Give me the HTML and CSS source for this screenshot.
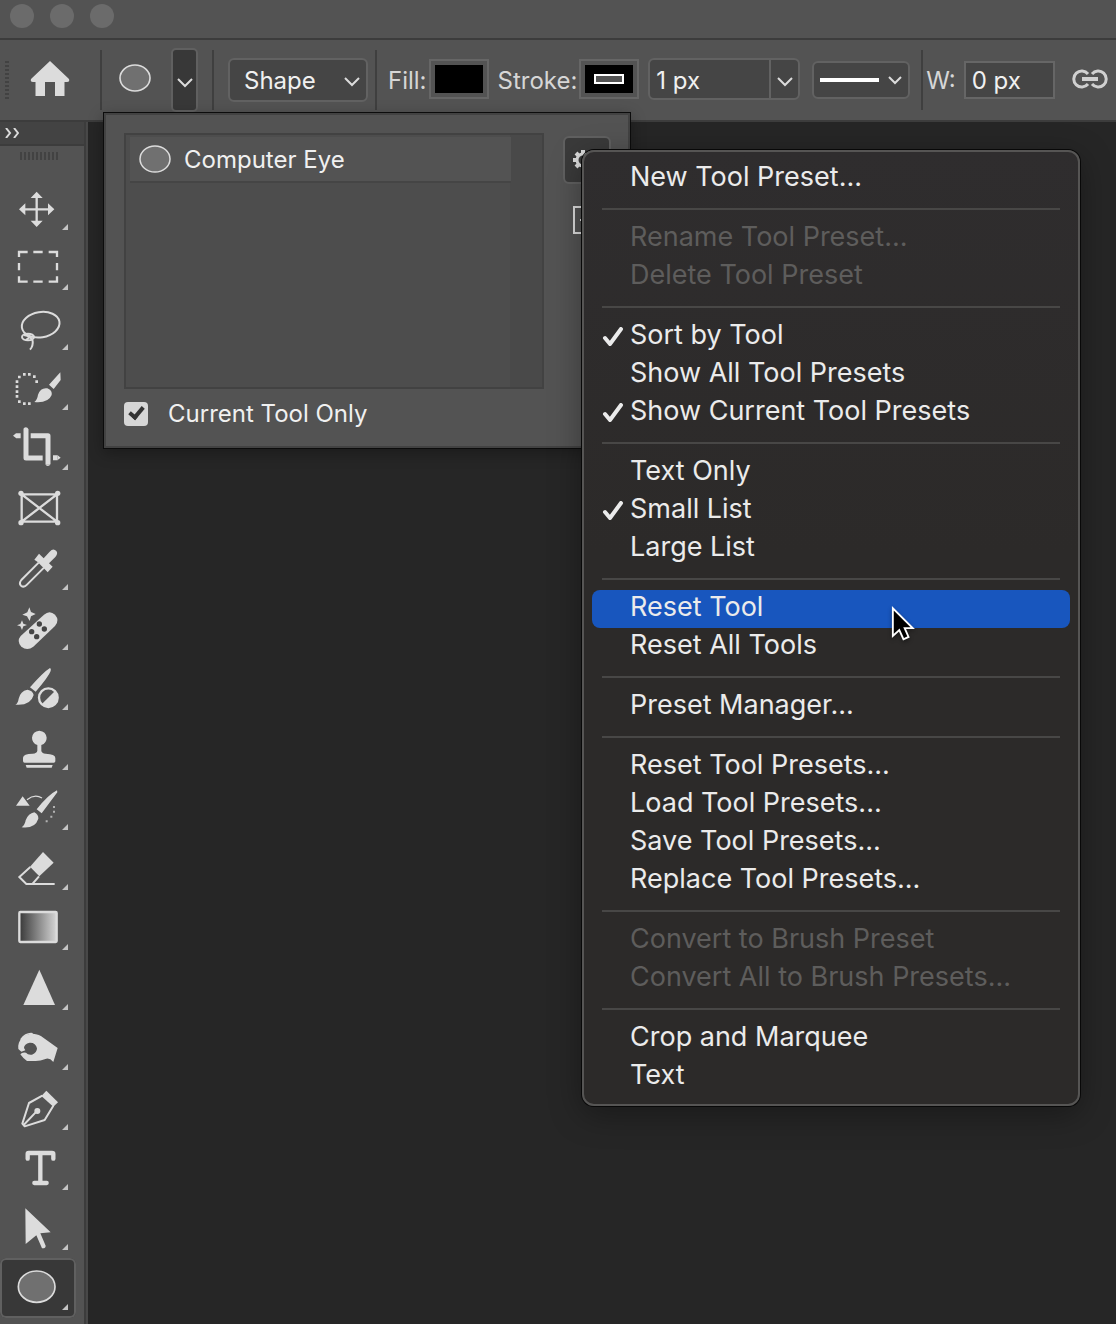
FILE: index.html
```html
<!DOCTYPE html>
<html lang="en">
<head>
	<meta charset="utf-8">
	<title>Tool Presets</title>
	<link rel="stylesheet" href="styles.css">
</head>
<body>
	<div class="titlebar">
		<span class="dot"></span>
		<span class="dot"></span>
		<span class="dot"></span>
	</div>

	<div class="options">
		<span class="grip"></span>
		<button class="home" aria-label="Home">
			<svg width="40" height="38" viewBox="0 0 40 38"><path d="M20 1 L39 19 Q40 22 37 22 H34.500 V36 H25 V22 H15 V36 H5.500 V22 H3 Q0 22 1 19 Z" fill="#dcdcdc"/></svg>
		</button>
		<span class="line"></span>
		<svg class="current" width="32" height="28" viewBox="0 0 32 28"><ellipse cx="16" cy="14" rx="15" ry="13" fill="#707070" stroke="#dcdcdc" stroke-width="1.600"/></svg>

		<div class="preset">
			<button class="preset-open" aria-label="Tool presets">
				<svg width="16" height="10" viewBox="0 0 16 10"><path d="M1 1 L8 8 L15 1" class="chevron"/></svg>
			</button>

			<div class="panel">
				<div class="panel-left">
					<div class="list">
						<div class="row">
							<svg width="32" height="28" viewBox="0 0 32 28"><ellipse cx="16" cy="14" rx="15" ry="13" fill="#707070" stroke="#dcdcdc" stroke-width="1.500"/></svg>
							<span>Computer Eye</span>
						</div>
					</div>
					<label class="only"><input type="checkbox" checked>Current Tool Only</label>
				</div>
				<div class="panel-right">
					<button class="gear" aria-label="Preset options">
						<svg width="28" height="28" viewBox="0 0 28 28"><circle cx="14" cy="14" r="6" fill="none" stroke="#dcdcdc" stroke-width="3"/><path d="M14 4V8M14 20V24M4 14H8M20 14H24M7 7L10 10M18 18L21 21M21 7L18 10M10 18L7 21" stroke="#dcdcdc" stroke-width="4"/></svg>
					</button>
					<button class="new" aria-label="Create new preset">
						<svg width="28" height="28" viewBox="0 0 28 28"><path d="M1 1H27V27H1ZM7 14H21M14 7V21" fill="none" stroke="#dcdcdc" stroke-width="2"/></svg>
					</button>
				</div>

				<ul class="menu">
					<li><button>New Tool Preset...</button></li>
					<li class="sep"></li>
					<li><button disabled>Rename Tool Preset...</button></li>
					<li><button disabled>Delete Tool Preset</button></li>
					<li class="sep"></li>
					<li><button><svg class="check" width="22" height="20" viewBox="0 0 22 20"><path d="M3 11 L8 17 L19 2"/></svg>Sort by Tool</button></li>
					<li><button>Show All Tool Presets</button></li>
					<li><button><svg class="check" width="22" height="20" viewBox="0 0 22 20"><path d="M3 11 L8 17 L19 2"/></svg>Show Current Tool Presets</button></li>
					<li class="sep"></li>
					<li><button>Text Only</button></li>
					<li><button><svg class="check" width="22" height="20" viewBox="0 0 22 20"><path d="M3 11 L8 17 L19 2"/></svg>Small List</button></li>
					<li><button>Large List</button></li>
					<li class="sep"></li>
					<li><button class="over">Reset Tool</button>
						<svg class="cursor" width="24" height="36" viewBox="0 0 26 38"><path d="M2 2 V32 L9 25.500 L13.500 35.500 L19 33 L14.800 23.500 H23.500 Z" fill="#000" stroke="#fff" stroke-width="2"/></svg>
					</li>
					<li><button>Reset All Tools</button></li>
					<li class="sep"></li>
					<li><button>Preset Manager...</button></li>
					<li class="sep"></li>
					<li><button>Reset Tool Presets...</button></li>
					<li><button>Load Tool Presets...</button></li>
					<li><button>Save Tool Presets...</button></li>
					<li><button>Replace Tool Presets...</button></li>
					<li class="sep"></li>
					<li><button disabled>Convert to Brush Preset</button></li>
					<li><button disabled>Convert All to Brush Presets...</button></li>
					<li class="sep"></li>
					<li><button>Crop and Marquee</button></li>
					<li><button>Text</button></li>
				</ul>
			</div>
		</div>

		<span class="line"></span>
		<div class="mode">
			<select aria-label="Tool mode"><option>Shape</option><option>Path</option><option>Pixels</option></select>
			<svg width="16" height="10" viewBox="0 0 16 10"><path d="M1 1 L8 8 L15 1" class="chevron"/></svg>
		</div>
		<span class="line"></span>
		<label for="fill">Fill:</label>
		<button class="swatch" id="fill"><span></span></button>
		<label class="stroke-label" for="stroke">Stroke:</label>
		<button class="swatch" id="stroke"><span><i></i></span></button>
		<div class="size">
			<input type="text" value="1 px" aria-label="Stroke width">
			<button aria-label="Stroke width list"><svg width="16" height="10" viewBox="0 0 16 10"><path d="M1 1 L8 8 L15 1" class="chevron"/></svg></button>
		</div>
		<button class="style" aria-label="Stroke type">
			<span></span>
			<svg width="14" height="9" viewBox="0 0 14 9"><path d="M1 1 L7 7 L13 1" class="chevron"/></svg>
		</button>
		<span class="line"></span>
		<label for="width">W:</label>
		<input class="width" id="width" type="text" value="0 px">
		<button class="link" aria-label="Link width and height">
			<svg width="36" height="20" viewBox="0 0 36 20"><path d="M16 5 A8 8 0 1 0 16 15 M20 5 A8 8 0 1 1 20 15" fill="none" stroke="#d0d0d0" stroke-width="3"/><path d="M10 10 H26" stroke="#d0d0d0" stroke-width="4"/></svg>
		</button>
	</div>

	<div class="main">
		<div class="tools">
			<button class="expand" aria-label="Expand panel">
				<svg width="14" height="10" viewBox="0 0 14 10"><path d="M1 0 L5 5 L1 10 M9 0 L13 5 L9 10" fill="none" stroke="#dcdcdc" stroke-width="2"/></svg>
			</button>
			<span class="tools-grip"></span>

			<!-- every icon is drawn on a 228 x 180 grid, three units to a pixel -->
			<button class="tool" aria-label="Move">
				<svg viewBox="0 204 228 180"><path d="M110 262V334M74 298H146" class="o" stroke-width="7"/><path d="M110 245L128 264H92ZM110 351L128 332H92ZM57 298L76 280V316ZM163 298L144 280V316Z"/></svg>
			</button>
			<button class="tool" aria-label="Marquee">
				<svg viewBox="0 384 228 180"><path d="M57 441V426H83M100 426H128M146 426H171V441M171 459V481M171 499V515H146M128 515H100M83 515H57V499M57 481V459" class="o" stroke-width="7"/></svg>
			</button>
			<button class="tool" aria-label="Lasso">
				<svg viewBox="0 564 228 180"><g class="o" stroke-width="6"><ellipse cx="122" cy="644" rx="57" ry="38" transform="rotate(-9 122 644)"/><ellipse cx="84" cy="681" rx="18" ry="10"/><path d="M72 675Q94 679 98 693Q100 708 90 719M78 690Q86 682 100 679"/></g></svg>
			</button>
			<button class="tool" aria-label="Quick selection">
				<svg viewBox="0 24 228 180"><path d="M106 91h8v8h-8zM99 76h8v8h-8zM84 69h8v8h-8zM69 69h8v8h-8zM54 77h8v8h-8zM47 91h8v8h-8zM47 106h8v8h-8zM47 121h8v8h-8zM47 135h8v8h-8zM54 151h8v8h-8zM69 157h8v8h-8zM84 157h8v8h-8z"/><path d="M181 67L182 90L161 117L147 104ZM103 156Q112 149 114 134Q122 112 142 115Q158 122 155 135Q145 160 103 156Z"/></svg>
			</button>
			<button class="tool" aria-label="Crop">
				<svg viewBox="0 204 228 180"><g class="o" stroke-width="15" stroke-linejoin="round"><path d="M78 237V324H128M92 257H144V343"/><path d="M48 257H62M159 323H173"/></g><path d="M70 237a8 8 0 0 1 15 0zM136 343a8 8 0 0 0 15 0zM48 250L39 257L48 264zM173 316L182 323L173 330z"/></svg>
			</button>
			<button class="tool plain" aria-label="Frame">
				<svg viewBox="0 384 228 180"><path d="M65 433H171V515H65ZM65 433L171 515M171 433L65 515" class="o" stroke-width="7"/><circle cx="63" cy="430" r="8"/><circle cx="173" cy="430" r="8"/><circle cx="63" cy="518" r="8"/><circle cx="173" cy="518" r="8"/></svg>
			</button>
			<button class="tool" aria-label="Eyedropper">
				<svg viewBox="0 564 228 180"><path d="M116 638L64 690Q56 700 63 707Q72 714 81 704L132 653" class="o" stroke-width="6"/><path d="M117 611L131 625L149 605Q160 593 169 603Q175 611 166 621L147 640L158 650L143 667L133 656L113 636L103 629Z"/></svg>
			</button>
			<button class="tool" aria-label="Spot healing brush">
				<svg viewBox="0 24 228 180"><path d="M132 74Q149 59 165 74Q180 91 165 108L100 170Q82 184 64 170Q49 154 62 138Z"/><path d="M88 52L93 66L107 72L93 79L89 93L81 79L67 74L82 67ZM66 91L70 101L81 105L70 109L66 120L61 109L51 106L61 102Z"/><g fill="#444"><circle cx="118" cy="102" r="8"/><circle cx="133" cy="117" r="8"/><circle cx="95" cy="125" r="8"/><circle cx="110" cy="140" r="8"/></g></svg>
			</button>
			<button class="tool" aria-label="Brush">
				<svg viewBox="0 204 228 180"><path d="M150 234Q154 235 152 243Q146 260 107 305L90 292Q130 246 150 234ZM46 344Q54 340 56 326Q61 303 82 299Q99 302 101 315Q92 348 46 344Z"/><circle cx="145" cy="323" r="28" class="o" stroke-width="7"/><path d="M165 303A28 28 0 0 1 125 343Z"/></svg>
			</button>
			<button class="tool" aria-label="Clone stamp">
				<svg viewBox="0 384 228 180"><path d="M112 465Q96 459 96 443Q98 424 118 422Q138 424 140 443Q140 459 124 465V482Q125 490 137 491Q167 492 166 505V514Q166 518 161 518H74Q69 518 69 513V503Q70 491 98 491Q111 490 112 482ZM77 525H158L155 533H80Z"/></svg>
			</button>
			<button class="tool" aria-label="History brush">
				<svg viewBox="0 564 228 180"><path d="M171 601L172 607L125 670L110 658Q145 614 171 601ZM65 712Q75 705 77 691Q85 670 103 667Q116 674 115 686Q105 717 65 712ZM48 647L68 619L89 647Z"/><path d="M81 629Q104 611 126 624" class="o" stroke-width="4"/><path d="M159 648h6v6h-6zM159 662h6v6h-6zM151 677h6v6h-6zM137 691h6v6h-6z" opacity=".7"/></svg>
			</button>
			<button class="tool" aria-label="Eraser">
				<svg viewBox="0 24 228 180"><path d="M129 66L161 98L118 139L90 110Z"/><path d="M91 111L58 141L79 162H164M117 139L98 161" class="o" stroke-width="6"/></svg>
			</button>
			<button class="tool" aria-label="Gradient">
				<svg viewBox="0 204 228 180"><defs><linearGradient id="g"><stop offset="0" stop-color="#383838"/><stop offset="1" stop-color="#d6d6d6"/></linearGradient></defs><rect x="58" y="246" width="112" height="90" rx="3" fill="url(#g)" stroke="#dcdcdc" stroke-width="7"/></svg>
			</button>
			<button class="tool" aria-label="Sharpen">
				<svg viewBox="0 384 228 180"><path d="M118 419L165 525H70Z"/></svg>
			</button>
			<button class="tool" aria-label="Sponge">
				<svg viewBox="0 564 228 180"><path fill-rule="evenodd" d="M55 657C52 629 73 611 98 611Q119 612 130 623L173 654L160 696Q150 684 139 686Q120 693 107 693H81Q70 686 61 673Q67 665 78 668Q84 676 96 674Q111 668 111 655Q107 637 89 638Q72 642 72 654L76 661L64 665Z"/><path d="M62 629Q78 608 98 611" class="o" stroke-width="4"/></svg>
			</button>
			<button class="tool" aria-label="Pen">
				<svg viewBox="0 24 228 180"><path d="M127 77L87 99L67 161L74 169L134 150L160 107M71 165L109 125" class="o" stroke-width="6" stroke-linejoin="round"/><circle cx="112" cy="123" r="9"/><path d="M139 62L174 97L160 110L124 78Z"/></svg>
			</button>
			<button class="tool" aria-label="Type">
				<svg viewBox="0 204 228 180"><path d="M83 266V252Q83 249 86 249H156Q160 249 160 252V266M121 250V338" class="o" stroke-width="13" stroke-linecap="round"/><path d="M103 339H140" class="o" stroke-width="13" stroke-linecap="round"/></svg>
			</button>
			<button class="tool" aria-label="Path selection">
				<svg viewBox="0 384 228 180"><path d="M76 415L152 487L121 490L137 527Q137 536 126 535L109 496L77 522Z"/></svg>
			</button>
			<button class="tool active" aria-label="Ellipse">
				<svg viewBox="0 564 228 180"><ellipse cx="110" cy="650" rx="55" ry="47" fill="#707070" stroke="#dcdcdc" stroke-width="5"/></svg>
			</button>
		</div>
		<div class="canvas"></div>
	</div>
</body>
</html>
```

FILE: styles.css
```css
*
{
	margin: 0;
	padding: 0;
	box-sizing: border-box;
}
body
{
	display: flex;
	flex-direction: column;
	min-height: 100vh;
	overflow-x: hidden;
	background: #262626;
	color: #f0f0f0;
	font-family: Inter, "Liberation Sans", sans-serif;
	font-size: 24px;
}
button, input, select
{
	border: 0;
	background: none;
	color: inherit;
	font: inherit;
}
svg
{
	display: block;
	flex: none;
}
.chevron
{
	fill: none;
	stroke: #dcdcdc;
	stroke-width: 2;
}

/* window bar */
.titlebar
{
	display: flex;
	gap: 16px;
	height: 40px;
	padding: 4px 10px;
	background: #535353;
	border-bottom: 2px solid #3c3c3c;
}
.dot
{
	width: 24px;
	height: 24px;
	border-radius: 50%;
	background: #6b6b6b;
}

/* options bar */
.options
{
	display: flex;
	align-items: center;
	height: 82px;
	padding-left: 5px;
	background: #535353;
	border-bottom: 2px solid #3c3c3c;
}
.options > *
{
	flex: none;
}
.options label
{
	color: #d6d6d6;
}
.grip
{
	width: 4px;
	height: 38px;
	background: repeating-linear-gradient(#424242 0 2px, #535353 2px 4px);
}
.home
{
	margin: 0 30px 2px 21px;
}
.line
{
	width: 2px;
	height: 60px;
	background: #3f3f3f;
}
.current
{
	margin: 0 20px 4px 17px;
}
.preset
{
	position: relative;
	margin-right: 14px;
}
.preset-open
{
	display: flex;
	align-items: center;
	justify-content: center;
	width: 27px;
	height: 64px;
	padding-top: 6px;
	border: 2px solid #606060;
	border-radius: 5px;
	background: #383838;
}
.mode
{
	position: relative;
	margin: 0 7px 0 14px;
}
.mode select
{
	display: block;
	appearance: none;
	width: 140px;
	height: 44px;
	padding-left: 14px;
	border: 2px solid #626262;
	border-radius: 6px;
	background: #454545;
}
.mode svg
{
	position: absolute;
	right: 8px;
	top: 19px;
	pointer-events: none;
}
.line + label
{
	margin-left: 11px;
}
.swatch
{
	width: 60px;
	height: 40px;
	margin: 0 0 2px 2px;
	padding: 4px;
	border: 2px solid #666;
}
.swatch span
{
	display: flex;
	align-items: center;
	justify-content: center;
	height: 28px;
	background: #000;
}
.swatch i
{
	width: 30px;
	height: 10px;
	border: 2px solid #fff;
	background: #535353;
}
.stroke-label
{
	margin-left: 9px;
}
.size
{
	display: flex;
	width: 152px;
	height: 42px;
	margin: 0 0 2px 9px;
	border: 2px solid #626262;
	border-radius: 6px;
	background: #454545;
}
.size input
{
	flex: 1;
	min-width: 0;
	padding: 2px 0 0 6px;
}
.size button
{
	display: flex;
	align-items: center;
	justify-content: center;
	width: 29px;
	padding-top: 6px;
	border-left: 2px solid #626262;
}
.style
{
	display: flex;
	align-items: center;
	justify-content: space-between;
	width: 98px;
	height: 38px;
	margin: 0 11px 0 12px;
	padding: 0 6px;
	border: 2px solid #626262;
	border-radius: 6px;
	background: #454545;
}
.style span
{
	width: 59px;
	height: 4px;
	background: #fff;
}
.style + .line + label
{
	margin-left: 3px;
}
.width
{
	width: 91px;
	height: 38px;
	margin: 0 17px 0 8px;
	padding-left: 6px;
	border: 2px solid #666;
	background: #454545;
}
.link
{
	margin-bottom: 2px;
}

/* preset panel, drops from the options bar */
.panel
{
	position: absolute;
	left: -68px;
	top: 64px;
	z-index: 1;
	display: flex;
	gap: 19px;
	width: 528px;
	height: 337px;
	padding: 18px 20px;
	border: 1px solid #0c0c0c;
	background: #535353;
	box-shadow: inset 0 0 0 2px #424242, 0 4px 14px rgba(0, 0, 0, .3);
}
.list
{
	width: 420px;
	height: 256px;
	margin-top: 2px;
	padding: 2px 4px;
	border: 2px solid #424242;
	background: linear-gradient(90deg, #4d4d4d 384px, #494949 384px);
}
.row
{
	display: flex;
	align-items: center;
	gap: 13px;
	width: 381px;
	height: 44px;
	padding-left: 9px;
	background: #535353;
	box-shadow: 0 2px #454545;
}
.panel .only
{
	display: flex;
	align-items: center;
	gap: 20px;
	margin-top: 10px;
	color: #f0f0f0;
}
.only input
{
	display: flex;
	align-items: center;
	justify-content: center;
	appearance: none;
	width: 24px;
	height: 24px;
	border-radius: 4px;
	background: #d6d6d6;
}
.only input:checked::before
{
	content: "";
	box-sizing: border-box;
	width: 9px;
	height: 15px;
	margin-bottom: 4px;
	border: solid #333;
	border-width: 0 4px 4px 0;
	transform: rotate(40deg);
}
.panel-right
{
	padding-top: 5px;
}
.gear
{
	display: flex;
	align-items: center;
	justify-content: center;
	width: 48px;
	height: 48px;
	border: 2px solid #606060;
	border-radius: 6px;
	background: #3a3a3a;
}
.gear svg
{
	margin-right: 8px;
}
.new
{
	margin: 22px 0 0 10px;
}

/* context menu */
.menu
{
	position: absolute;
	left: 478px;
	top: 37px;
	width: 498px;
	padding: 8px;
	border: 2px solid #565554;
	border-radius: 12px;
	background: linear-gradient(#2f2d2e, #2c2a29 400px);
	box-shadow: 0 0 0 1px #080808, 0 8px 32px rgba(0, 0, 0, .35);
	font-size: 27px;
	list-style: none;
}
.menu li
{
	position: relative;
}
.menu button
{
	display: block;
	width: 100%;
	height: 38px;
	padding: 0 0 4px 38px;
	border-radius: 8px;
	line-height: 34px;
	text-align: left;
	color: #ebebeb;
	white-space: nowrap;
}
.menu button:disabled
{
	color: #5e5d5c;
}
.menu .over
{
	background: #1856be;
}
.menu .sep
{
	height: 2px;
	margin: 10px;
	background: #484746;
}
.check
{
	position: absolute;
	left: 10px;
	top: 9px;
	fill: none;
	stroke: #ebebeb;
	stroke-width: 4;
	stroke-linecap: round;
	stroke-linejoin: round;
}
.cursor
{
	position: absolute;
	left: 299px;
	top: 16px;
	z-index: 1;
	filter: drop-shadow(0 2px 2px rgba(0, 0, 0, .4));
}

/* tool strip */
.main
{
	display: flex;
	flex: 1;
}
.tools
{
	display: flex;
	flex-direction: column;
	align-items: flex-start;
	width: 88px;
	background: #535353;
	border-right: 2px solid #484848;
	box-shadow: inset -2px 0 #3c3c3c;
}
.expand
{
	width: 84px;
	height: 24px;
	padding-left: 5px;
	border-bottom: 2px solid #3c3c3c;
	background: #434343;
}
.tools-grip
{
	width: 38px;
	height: 8px;
	margin: 6px 0 18px 20px;
	background: repeating-linear-gradient(90deg, #424242 0 2px, #535353 2px 4px);
}
.tool
{
	position: relative;
	width: 76px;
	height: 60px;
}
.tool svg
{
	width: 76px;
	height: 60px;
	fill: #dcdcdc;
}
.tool .o
{
	fill: none;
	stroke: #dcdcdc;
}
.tool::after
{
	content: "";
	position: absolute;
	right: 8px;
	bottom: 8px;
	border: 3px solid;
	border-color: transparent #c4c4c4 #c4c4c4 transparent;
}
.plain::after
{
	display: none;
}
.active
{
	border-radius: 6px;
	background: #383838;
	box-shadow: inset 0 0 0 2px #606060;
}
.canvas
{
	flex: 1;
	background: #262626;
}
```
